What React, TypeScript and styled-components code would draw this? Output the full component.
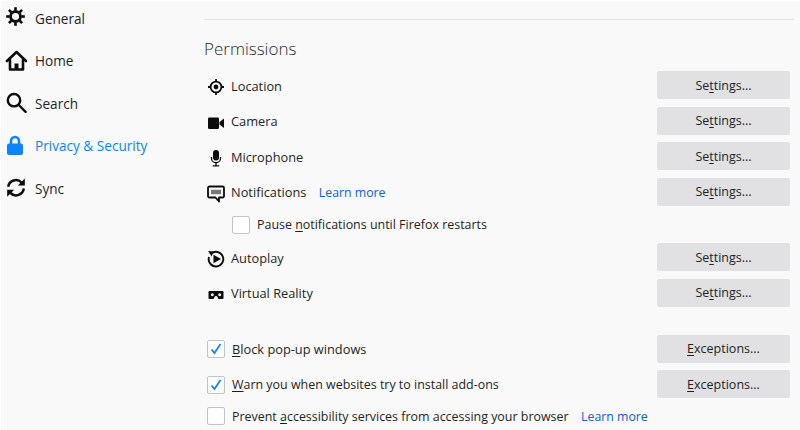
import React from 'react'
import styled, { createGlobalStyle } from 'styled-components'

const GlobalStyle = createGlobalStyle`
    html, body {
        margin: 0;
        height: 100%;
        overflow: hidden;
        background: #f9f9fa;
    }
    #root {
        height: 100%;
    }
`

const Page = styled.div`
    display: flex;
    width: 800px;
    height: 430px;
    overflow: hidden;
    background: #f9f9fa;
    box-shadow: inset 1px 1px 0 #fff;
    color: #1f1f24;
    font-family: 'Open Sans', 'Noto Sans', sans-serif;
    font-size: 12.8px;
`

const Sidebar = styled.nav`
    display: flex;
    flex-direction: column;
    flex: none;
    width: 204px;
    padding-top: 1px;
    box-sizing: border-box;
`

const NavItem = styled.div<{ $active?: boolean }>`
    display: flex;
    align-items: center;
    gap: 8px;
    height: 34px;
    margin-bottom: 8.5px;
    padding-left: 5px;
    font-size: 13.6px;
    color: ${(p) => (p.$active ? '#0a84ff' : '#1f1f24')};

    & svg {
        flex: none;
        width: 22px;
        height: 22px;
    }
`

const Main = styled.main`
    flex: 1;
    padding: 19px 10px 0 0;
`

const Rule = styled.div`
    height: 1px;
    margin-right: -4px;
    background: #e3e3e5;
`

const Heading = styled.h2`
    margin: 16px 0 10px;
    height: 25px;
    font-size: 17px;
    line-height: 25px;
    font-weight: 300;
    color: #2a2a2e;
`

const Row = styled.div<{ $gap?: number }>`
    display: flex;
    align-items: center;
    justify-content: space-between;
    height: 28px;
    margin-bottom: ${(p) => p.$gap ?? 7.6}px;
`

const RowLabel = styled.div`
    display: flex;
    align-items: center;
    padding-top: 1px;
`

const LongText = styled.span`
    font-size: 12.45px;
`

const IconSlot = styled.span`
    display: flex;
    align-items: center;
    justify-content: center;
    flex: none;
    width: 22px;
    height: 20px;
    margin: 3px 4px 0 1px;

    & svg {
        width: 18px;
        height: 18px;
    }
`

const Button = styled.div`
    display: flex;
    align-items: center;
    justify-content: center;
    flex: none;
    width: 133px;
    height: 28px;
    border-radius: 2px;
    background: #e1e1e3;
    color: #1f1f24;
    font-size: 12.5px;
`

const Key = styled.span`
    text-decoration: underline;
    text-underline-offset: 2px;
    text-decoration-thickness: 1px;
`

const LearnMore = styled.a`
    margin-left: 12.5px;
    color: #0a60df;
    font-size: 12.3px;
`

const SubRow = styled.div`
    display: flex;
    align-items: center;
    height: 24px;
    margin: -0.6px 0 6.4px 25px;
`

const Box = styled.span`
    display: flex;
    align-items: center;
    justify-content: center;
    flex: none;
    box-sizing: border-box;
    width: 18px;
    height: 18px;
    margin: 0 7px 0 3px;
    border: 1px solid #c4c4c6;
    border-radius: 2px;
    background: #fff;

    & svg {
        width: 14px;
        height: 14px;
    }
`

const LastRow = styled(RowLabel)`
    margin-top: 9px;
    padding-top: 0;
`

const Check = () => (
    <svg viewBox="0 0 14 14" fill="none" stroke="#0a84ff" strokeWidth="1.7">
        <path d="M2.5 7.5 L5.5 11 L11.5 2" />
    </svg>
)

const Gear = () => (
    <svg viewBox="0 0 22 22" fill="none" stroke="#0c0c0d">
        <circle cx="10.5" cy="9.5" r="5" strokeWidth="2.8" />
        {[0, 45, 90, 135, 180, 225, 270, 315].map((deg) => (
            <path key={deg} d="M10.5 3.5 V0.2" strokeWidth="2.6" transform={`rotate(${deg} 10.5 9.5)`} />
        ))}
    </svg>
)

const Home = () => (
    <svg viewBox="0 0 22 22" fill="none" stroke="#0c0c0d" strokeWidth="2.6" strokeLinejoin="round" strokeLinecap="round">
        <path d="M2 11 L11.5 2 L21 11" />
        <path d="M5 10 V19.5 H18 V10" />
        <path d="M9.5 20 V13.5 H13.5 V20 Z" fill="#0c0c0d" stroke="none" />
    </svg>
)

const Search = () => (
    <svg viewBox="0 0 22 22" fill="none" stroke="#0c0c0d" strokeWidth="2.4" strokeLinecap="round">
        <circle cx="9" cy="8.2" r="6.2" />
        <path d="M13.800 13 L20.600 19.800" />
    </svg>
)

const Lock = () => (
    <svg viewBox="0 0 22 22" fill="#0a84ff">
        <path d="M6 9 V6 a4 4 0 0 1 8 0 V9" fill="none" stroke="#0a84ff" strokeWidth="2.6" />
        <rect x="2" y="8.500" width="16" height="11.500" rx="2" />
    </svg>
)

const Sync = () => (
    <svg viewBox="0 0 22 22" fill="none" stroke="#0c0c0d" strokeWidth="2.5">
        <path d="M3.200 9.800 A7.800 7.800 0 0 1 16.500 5.500" />
        <path d="M18.800 11.500 A7.800 7.800 0 0 1 5.500 16" />
        <path d="M19.800 1.500 V8.500 H12.800 Z" fill="#0c0c0d" stroke="none" />
        <path d="M2.200 19.800 V12.800 H9.200 Z" fill="#0c0c0d" stroke="none" />
    </svg>
)

const LocationIcon = () => (
    <svg viewBox="0 0 18 18" fill="none" stroke="#0c0c0d" strokeWidth="1.800">
        <circle cx="9" cy="9" r="5.400" />
        <circle cx="9" cy="9" r="2.400" fill="#0c0c0d" stroke="none" />
        <path d="M9 1 V3.500 M9 14.500 V17 M1 9 H3.500 M14.500 9 H17" />
    </svg>
)

const CameraIcon = () => (
    <svg viewBox="0 0 18 18" fill="#0c0c0d">
        <rect x="1" y="3.500" width="11" height="11.500" rx="1.200" />
        <path d="M12.500 8 L17 4.500 V14 L12.500 10.500 Z" />
    </svg>
)

const MicIcon = () => (
    <svg viewBox="0 0 18 18" fill="none" stroke="#0c0c0d" strokeWidth="1.300">
        <rect x="6" y="1" width="6" height="10.500" rx="3" fill="#0c0c0d" stroke="none" />
        <path d="M4.500 8 V9.200 a4.500 4.500 0 0 0 9 0 V8" />
        <path d="M9 13.800 V16.500 M5.800 16.800 H12.200" />
    </svg>
)

const BubbleIcon = () => (
    <svg viewBox="0 0 18 18" fill="none" stroke="#0c0c0d" strokeWidth="1.800" strokeLinejoin="round">
        <path d="M2.500 1.500 H15.500 a1.500 1.500 0 0 1 1.500 1.500 V11 a1.500 1.500 0 0 1 -1.500 1.500 H12 V16.500 L8.500 12.500 H2.500 a1.500 1.500 0 0 1 -1.500 -1.500 V3 a1.500 1.500 0 0 1 1.500 -1.500 Z" />
        <rect x="4" y="4.800" width="10" height="4.400" fill="#77777a" stroke="none" />
    </svg>
)

const AutoplayIcon = () => (
    <svg viewBox="0 0 18 18" fill="none" stroke="#0c0c0d" strokeWidth="1.900">
        <path d="M4 3.800 A7.300 7.300 0 1 1 2 7" />
        <path d="M1 1 L6.500 1.500 L4.600 6.500 Z" fill="#0c0c0d" stroke="none" />
        <path d="M6.500 4.800 L14 9 L6.500 13.200 Z" fill="#0c0c0d" stroke="none" />
    </svg>
)

const VrIcon = () => (
    <svg viewBox="0 0 18 18" fill="#0c0c0d">
        <path d="M2.500 5 H15.500 a1 1 0 0 1 1 1 V12 a1 1 0 0 1 -1 1 H11.500 L10.500 11 a1.600 1.600 0 0 0 -3 0 L6.500 13 H2.500 a1 1 0 0 1 -1 -1 V6 a1 1 0 0 1 1 -1 Z M5.300 7.300 a1.500 1.500 0 1 0 0.010 0 Z M12.700 7.300 a1.500 1.500 0 1 0 0.010 0 Z" fillRule="evenodd" />
    </svg>
)

const navItems = [
    { label: 'General', icon: <Gear /> },
    { label: 'Home', icon: <Home /> },
    { label: 'Search', icon: <Search /> },
    { label: 'Privacy & Security', icon: <Lock />, active: true },
    { label: 'Sync', icon: <Sync /> },
]

const SettingsButton = () => (
    <Button>
        <span>Se<Key>t</Key>tings...</span>
    </Button>
)

const ExceptionsButton = () => (
    <Button>
        <span><Key>E</Key>xceptions...</span>
    </Button>
)

const App = () => {
    return (
        <Page>
            <GlobalStyle />
            <Sidebar>
                {navItems.map((item) => (
                    <NavItem key={item.label} $active={item.active}>
                        {item.icon}
                        {item.label}
                    </NavItem>
                ))}
            </Sidebar>
            <Main>
                <Rule />
                <Heading>Permissions</Heading>
                <Row>
                    <RowLabel>
                        <IconSlot><LocationIcon /></IconSlot>
                        Location
                    </RowLabel>
                    <SettingsButton />
                </Row>
                <Row>
                    <RowLabel>
                        <IconSlot><CameraIcon /></IconSlot>
                        Camera
                    </RowLabel>
                    <SettingsButton />
                </Row>
                <Row>
                    <RowLabel>
                        <IconSlot><MicIcon /></IconSlot>
                        Microphone
                    </RowLabel>
                    <SettingsButton />
                </Row>
                <Row>
                    <RowLabel>
                        <IconSlot><BubbleIcon /></IconSlot>
                        Notifications
                        <LearnMore>Learn more</LearnMore>
                    </RowLabel>
                    <SettingsButton />
                </Row>
                <SubRow>
                    <Box />
                    <LongText>Pause <Key>n</Key>otifications until Firefox restarts</LongText>
                </SubRow>
                <Row>
                    <RowLabel>
                        <IconSlot><AutoplayIcon /></IconSlot>
                        Autoplay
                    </RowLabel>
                    <SettingsButton />
                </Row>
                <Row $gap={28}>
                    <RowLabel>
                        <IconSlot><VrIcon /></IconSlot>
                        Virtual Reality
                    </RowLabel>
                    <SettingsButton />
                </Row>
                <Row>
                    <RowLabel>
                        <Box><Check /></Box>
                        <span><Key>B</Key>lock pop-up windows</span>
                    </RowLabel>
                    <ExceptionsButton />
                </Row>
                <Row $gap={0}>
                    <RowLabel>
                        <Box><Check /></Box>
                        <LongText>
                            <Key>W</Key>arn you when websites try to install add-ons
                        </LongText>
                    </RowLabel>
                    <ExceptionsButton />
                </Row>
                <LastRow>
                    <Box />
                    <LongText>
                        Prevent <Key>a</Key>ccessibility services from accessing your browser
                    </LongText>
                    <LearnMore>Learn more</LearnMore>
                </LastRow>
            </Main>
        </Page>
    )
}

export default App
